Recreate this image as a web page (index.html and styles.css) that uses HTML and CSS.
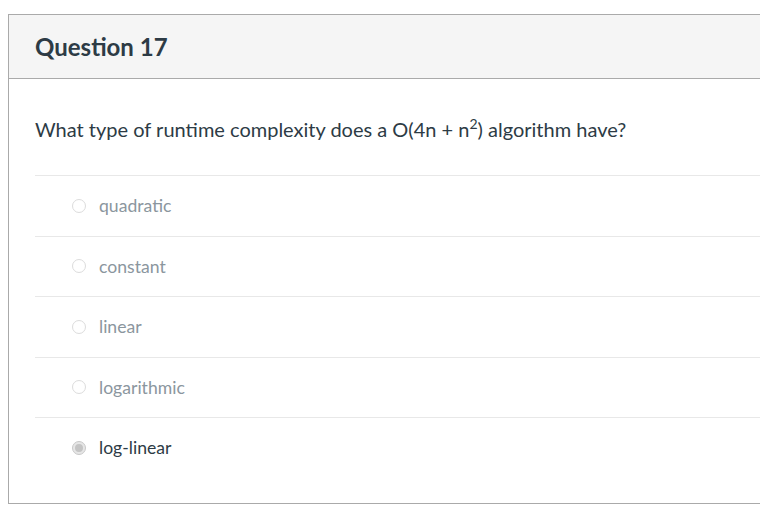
FILE: index.html
```html
<!DOCTYPE html>
<html>
<head>
<meta charset="utf-8">
<link rel="stylesheet" href="styles.css">
</head>
<body>
<div class="question">
  <div class="header"><h2 class="title">Question 17</h2></div>
  <div class="body">
    <p class="prompt">What type of runtime complexity does a O(4n + n<sup>2</sup>) algorithm have?</p>
    <div class="answers">
      <div class="answer"><span class="radio"></span><span class="label">quadratic</span></div>
      <div class="answer"><span class="radio"></span><span class="label">constant</span></div>
      <div class="answer"><span class="radio"></span><span class="label">linear</span></div>
      <div class="answer"><span class="radio"></span><span class="label">logarithmic</span></div>
      <div class="answer selected"><span class="radio"></span><span class="label">log-linear</span></div>
    </div>
  </div>
</div>
</body>
</html>
```
FILE: styles.css
```css
html, body { margin: 0; padding: 0; background: #fff; }
body { font-family: Lato, "Open Sans", sans-serif; color: #2d3b45; overflow: hidden; }
.question {
  margin: 14px 0 0 8px;
  width: 760px;
  border: 1px solid #aaaaaa;
  border-right: none;
}
.header {
  background: #f5f5f5;
  border-bottom: 1px solid #aaaaaa;
  height: 63px;
  display: flex;
  align-items: center;
  padding-left: 26px;
}
.title { margin: 0; font-size: 24px; font-weight: 700; color: #2d3b45; }
.body { padding: 35px 0 0 26px; height: 424px; box-sizing: border-box; }
.prompt { margin: 0 0 31px 0; font-size: 20px; line-height: 30px; }
.prompt sup { font-size: 14px; line-height: 0; vertical-align: 8px; }
.answers { border-top: 1px solid #e8e8e8; }
.answer {
  height: 59.5px;
  display: flex;
  align-items: center;
  padding-left: 37px;
  border-bottom: 1px solid #e8e8e8;
}
.answer:last-child { border-bottom: none; }
.radio {
  width: 12px; height: 12px;
  border: 1px solid #dcdcdc;
  border-radius: 50%;
  background: #fff;
  margin-right: 13px;
  box-sizing: content-box;
  position: relative;
}
.label { font-size: 17.6px; color: #8b969e; }
.selected .label { color: #2d3b45; }
.selected .radio { border-color: #c8c8c8; background: #e6e6e6; }
.selected .radio::after {
  content: ""; position: absolute; left: 2px; top: 2px;
  width: 8px; height: 8px; border-radius: 50%; background: #c4c4c4;
}
```
